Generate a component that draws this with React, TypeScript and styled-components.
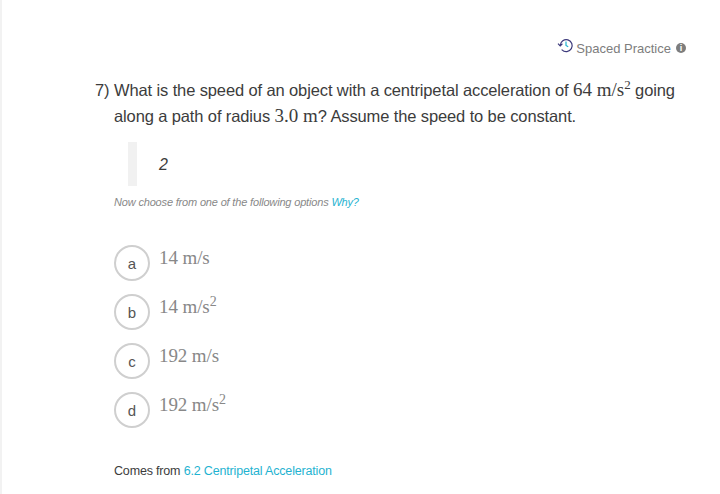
import styled, { createGlobalStyle } from "styled-components";

const GlobalStyle = createGlobalStyle`
  html, body {
    margin: 0;
    padding: 0;
    background: #fff;
  }
`;

const options = [
  { letter: "a", value: "14", unit: "m/s", squared: false },
  { letter: "b", value: "14", unit: "m/s", squared: true },
  { letter: "c", value: "192", unit: "m/s", squared: false },
  { letter: "d", value: "192", unit: "m/s", squared: true },
];

const App = () => {
  return (
    <Page>
      <GlobalStyle />
      <Badge>
        <svg width="18" height="18" viewBox="0 0 18 18" fill="none">
          <path
            d="M3.2 8.2A6 6 0 1 1 5 12.9"
            stroke="#3d3a7c"
            strokeWidth="1.2"
            strokeLinecap="round"
          />
          <path d="M1 6.6l2.2 2.2 2.2-2" stroke="#3d3a7c" strokeWidth="1.2" />
          <path d="M9 4.6v3.8l2.2 1.4" stroke="#1fb3d1" strokeWidth="1.2" />
        </svg>
        <BadgeText>Spaced Practice</BadgeText>
        <InfoIcon>i</InfoIcon>
      </Badge>

      <Question>
        <Number>7)</Number>
        <div>
          What is the speed of an object with a centripetal acceleration of{" "}
          <Math>
            64 m/s<sup>2</sup>
          </Math>{" "}
          going along a path of radius <Math>3.0 m</Math>? Assume the speed to
          be constant.
        </div>
      </Question>

      <Answer>2</Answer>

      <Hint>
        Now choose from one of the following options <Why>Why?</Why>
      </Hint>

      <Options>
        {options.map((o) => (
          <Option key={o.letter}>
            <Circle>{o.letter}</Circle>
            <OptionText>
              {o.value} {o.unit}
              {o.squared && <sup>2</sup>}
            </OptionText>
          </Option>
        ))}
      </Options>

      <Source>
        Comes from <SourceLink>6.2 Centripetal Acceleration</SourceLink>
      </Source>
    </Page>
  );
};

const Page = styled.div`
  box-sizing: border-box;
  width: 720px;
  height: 494px;
  overflow: hidden;
  border-left: 2px solid #f2f2f2;
  padding: 37px 34px 0 93px;
  font-family: "Liberation Sans", Arial, sans-serif;
`;

const Badge = styled.div`
  display: flex;
  justify-content: flex-end;
  align-items: center;
  height: 22px;
  gap: 1px;

  svg {
    margin-top: -5px;
  }
`;

const BadgeText = styled.span`
  font-size: 13px;
  letter-spacing: 0;
  color: #7d7d7d;
`;

const InfoIcon = styled.span`
  display: inline-flex;
  align-items: center;
  justify-content: center;
  width: 10px;
  height: 10px;
  margin-left: 4px;
  border-radius: 50%;
  background: #7d7d7d;
  color: #fff;
  font-size: 9px;
  font-weight: 700;
`;

const Question = styled.div`
  display: flex;
  margin-top: 18px;
  font-size: 16.5px;
  line-height: 26px;
  color: #3c3c3c;
  letter-spacing: -0.12px;

  sup {
    font-size: 13px;
    line-height: 0;
  }
`;

const Number = styled.span`
  flex: none;
  width: 19px;
`;

const Math = styled.span`
  font-family: "Liberation Serif", "Times New Roman", serif;
  font-size: 19px;
  line-height: 0;
  letter-spacing: 0;
`;

const Answer = styled.div`
  box-sizing: border-box;
  height: 44px;
  margin: 13px 0 0 33px;
  padding: 2px 0 0 22px;
  border-left: 9px solid #f1f1f1;
  display: flex;
  align-items: center;
  font-size: 16px;
  font-style: italic;
  color: #3c3c3c;
`;

const Hint = styled.div`
  margin: 9px 0 0 19px;
  font-size: 11px;
  line-height: 14px;
  font-style: italic;
  letter-spacing: -0.17px;
  color: #888;
`;

const Why = styled.span`
  color: #1fb3d1;
`;

const Options = styled.div`
  display: flex;
  flex-direction: column;
  gap: 13px;
  margin: 36px 0 0 19px;
`;

const Option = styled.div`
  display: flex;
  gap: 9px;
  height: 36px;
`;

const Circle = styled.div`
  box-sizing: border-box;
  width: 36px;
  height: 36px;
  border: 2px solid #cfcfcf;
  border-radius: 50%;
  display: flex;
  align-items: center;
  justify-content: center;
  font-size: 15px;
  color: #555;
`;

const OptionText = styled.div`
  font-family: "Liberation Serif", "Times New Roman", serif;
  font-size: 19px;
  line-height: 24px;
  margin-top: 1px;
  color: #888;
  letter-spacing: -0.1px;

  sup {
    font-size: 14px;
    line-height: 0;
  }
`;

const Source = styled.div`
  margin: 36px 0 0 19px;
  font-size: 12.5px;
  letter-spacing: -0.17px;
  color: #3c3c3c;
`;

const SourceLink = styled.span`
  color: #1fb3d1;
`;

export default App;
